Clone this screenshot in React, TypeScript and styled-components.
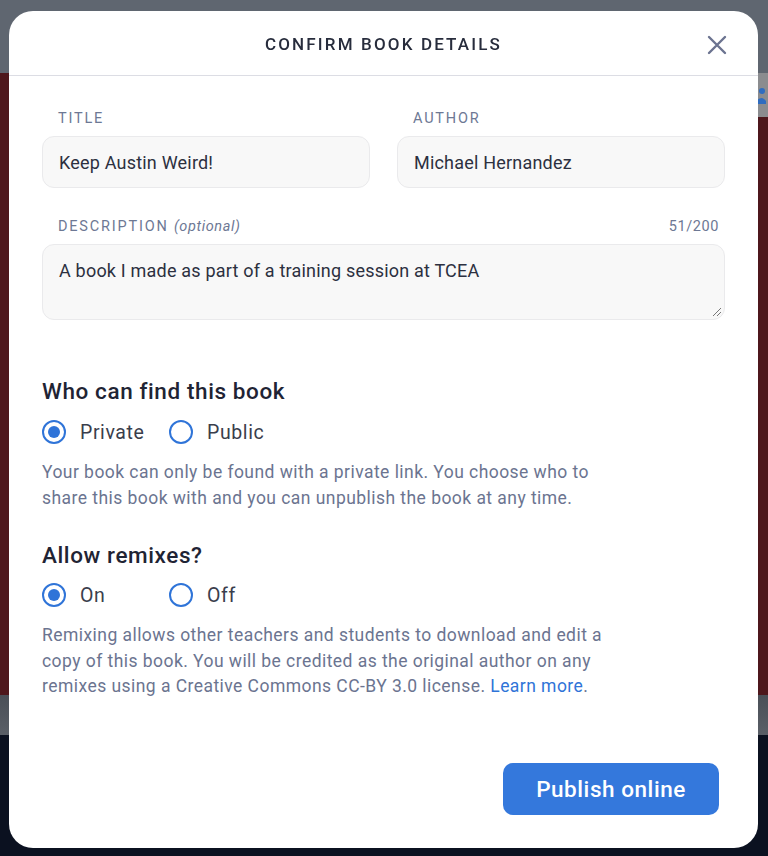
import React from "react";
import styled, { createGlobalStyle } from "styled-components";

const Global = createGlobalStyle`
  html, body { margin: 0; padding: 0; }
  body { font-family: Roboto, "Liberation Sans", sans-serif; -webkit-font-smoothing: antialiased; }
  * { box-sizing: border-box; }
`;

const Backdrop = styled.div`
  width: 768px;
  height: 856px;
  display: flex;
  flex-direction: column;
  overflow: hidden;
`;

const TopBar = styled.div`
  height: 73px;
  background: #5f6670;
`;

const Stage = styled.div`
  flex: 1;
  background: #4e171c;
  display: flex;
  justify-content: flex-end;
  align-items: flex-start;
`;

const ToolPanel = styled.div`
  width: 40px;
  height: 44px;
  background: #8b8c8f;
  display: flex;
  align-items: center;
  justify-content: flex-end;
  padding-right: 2px;
`;

const StripBar = styled.div`
  height: 40px;
  background: linear-gradient(#4a4f57, #5a5f67);
`;

const Footer = styled.div`
  height: 121px;
  background: #0b1120;
`;

const Overlay = styled.div`
  position: fixed;
  inset: 0;
  padding: 11px 10px 8px 9px;
  display: flex;
`;

const Modal = styled.div`
  flex: 1;
  background: #ffffff;
  border-radius: 24px;
  display: flex;
  flex-direction: column;
`;

const Header = styled.div`
  height: 65px;
  border-bottom: 1px solid #dcdde4;
  display: flex;
  align-items: center;
  justify-content: center;
  position: relative;
`;

const HeaderTitle = styled.h1`
  margin: 0;
  font-size: 17px;
  font-weight: 500;
  letter-spacing: 2.15px;
  color: #272c3c;
  padding-top: 2px;
`;

const CloseButton = styled.button`
  position: absolute;
  right: 31px;
  top: 24px;
  width: 20px;
  height: 20px;
  padding: 0;
  border: 0;
  background: none;
  display: flex;
  align-items: center;
  justify-content: center;
`;

const Body = styled.div`
  flex: 1;
  padding: 34px 33px 0 33px;
  display: flex;
  flex-direction: column;
`;

const FieldRow = styled.div`
  display: grid;
  grid-template-columns: 1fr 1fr;
  gap: 27px;
`;

const Field = styled.div<{ $gapTop?: number }>`
  display: flex;
  flex-direction: column;
  margin-top: ${(p) => p.$gapTop ?? 0}px;
`;

const LabelRow = styled.div`
  display: flex;
  justify-content: space-between;
  align-items: baseline;
  padding: 0 6px 0 16px;
  margin-bottom: 9px;
`;

const Label = styled.label`
  font-size: 14.5px;
  line-height: 17px;
  letter-spacing: 1.8px;
  color: #6d7894;
  text-transform: uppercase;
`;

const Optional = styled.em`
  text-transform: none;
  letter-spacing: 0.6px;
  font-style: italic;
`;

const Counter = styled.span`
  font-size: 14.5px;
  color: #6d7894;
  letter-spacing: 0.6px;
`;

const Input = styled.div`
  height: 52px;
  border: 1px solid #eaeaec;
  background: #f8f8f8;
  border-radius: 12px;
  padding: 0 16px;
  display: flex;
  align-items: center;
  font-size: 18px;
  letter-spacing: 0.2px;
  color: #2c3040;
`;

const TextArea = styled.div`
  height: 76px;
  border: 1px solid #eaeaec;
  background: #f8f8f8;
  border-radius: 12px;
  padding: 14px 16px;
  font-size: 18px;
  letter-spacing: 0.2px;
  line-height: 24px;
  color: #2c3040;
  position: relative;
`;

const Grip = styled.svg`
  position: absolute;
  right: 2px;
  bottom: 2px;
`;

const Section = styled.section<{ $gapTop: number }>`
  display: flex;
  flex-direction: column;
  margin-top: ${(p) => p.$gapTop}px;
`;

const SectionTitle = styled.h2`
  margin: 0;
  font-size: 22.5px;
  letter-spacing: 0.6px;
  line-height: 28px;
  font-weight: 500;
  color: #1f2434;
`;

const RadioGroup = styled.div<{ $gapTop: number }>`
  display: flex;
  margin-top: ${(p) => p.$gapTop}px;
`;

const RadioOption = styled.label`
  min-width: 127px;
  display: flex;
  align-items: center;
  gap: 13px;
  font-size: 19.5px;
  letter-spacing: 0.6px;
  color: #3a3e4c;
  height: 28px;
`;

const RadioLabel = styled.span`
  padding-left: 1px;
`;

const RadioCircle = styled.span<{ $checked?: boolean }>`
  width: 24px;
  height: 24px;
  border-radius: 50%;
  border: 2px solid #2f74d8;
  display: flex;
  align-items: center;
  justify-content: center;
  &::after {
    content: "";
    width: 12px;
    height: 12px;
    border-radius: 50%;
    background: ${(p) => (p.$checked ? "#2f74d8" : "transparent")};
  }
`;

const Help = styled.p<{ $gapTop: number }>`
  margin: ${(p) => p.$gapTop}px 0 0;
  font-size: 17.5px;
  letter-spacing: 0.45px;
  line-height: 25.5px;
  color: #6b7490;
`;

const Link = styled.a`
  color: #2f74d8;
  text-decoration: none;
`;

const Actions = styled.div`
  margin-top: auto;
  padding: 0 6px 33px 0;
  display: flex;
  justify-content: flex-end;
`;

const PrimaryButton = styled.button`
  width: 216px;
  height: 52px;
  border: 0;
  border-radius: 10px;
  background: #3478dc;
  color: #ffffff;
  font-family: Roboto, "Liberation Sans", sans-serif;
  font-size: 22.5px;
  letter-spacing: 0.55px;
  font-weight: 500;
`;

function Radio({ label, checked }: { label: string; checked?: boolean }) {
  return (
    <RadioOption>
      <RadioCircle $checked={checked} />
      <RadioLabel>{label}</RadioLabel>
    </RadioOption>
  );
}

export default function App() {
  return (
    <>
      <Global />
      <Backdrop>
        <TopBar />
        <Stage>
          <ToolPanel>
            <svg width="14" height="20" viewBox="0 0 14 20">
              <circle cx="10" cy="6" r="3" fill="#2f6cc0" />
              <path d="M4 16 q6 -6 10 0 v3 h-10z" fill="#2f6cc0" />
            </svg>
          </ToolPanel>
        </Stage>
        <StripBar />
        <Footer />
      </Backdrop>
      <Overlay>
        <Modal>
          <Header>
            <HeaderTitle>CONFIRM BOOK DETAILS</HeaderTitle>
            <CloseButton aria-label="Close">
              <svg width="20" height="20" viewBox="0 0 20 20">
                <path d="M2 2 L18 18 M18 2 L2 18" stroke="#6b7390" strokeWidth="2.4" strokeLinecap="round" />
              </svg>
            </CloseButton>
          </Header>
          <Body>
            <FieldRow>
              <Field>
                <LabelRow>
                  <Label>Title</Label>
                </LabelRow>
                <Input>Keep Austin Weird!</Input>
              </Field>
              <Field>
                <LabelRow>
                  <Label>Author</Label>
                </LabelRow>
                <Input>Michael Hernandez</Input>
              </Field>
            </FieldRow>
            <Field $gapTop={30}>
              <LabelRow>
                <Label>
                  Description <Optional>(optional)</Optional>
                </Label>
                <Counter>51/200</Counter>
              </LabelRow>
              <TextArea>
                A book I made as part of a training session at TCEA
                <Grip width="12" height="12" viewBox="0 0 12 12">
                  <path d="M3 11 L11 3 M7 11 L11 7" stroke="#777" strokeWidth="1" />
                </Grip>
              </TextArea>
            </Field>
            <Section $gapTop={57}>
              <SectionTitle>Who can find this book</SectionTitle>
              <RadioGroup $gapTop={13}>
                <Radio label="Private" checked />
                <Radio label="Public" />
              </RadioGroup>
              <Help $gapTop={14}>
                Your book can only be found with a private link. You choose who to
                <br />
                share this book with and you can unpublish the book at any time.
              </Help>
            </Section>
            <Section $gapTop={30}>
              <SectionTitle>Allow remixes?</SectionTitle>
              <RadioGroup $gapTop={12}>
                <Radio label="On" checked />
                <Radio label="Off" />
              </RadioGroup>
              <Help $gapTop={14}>
                Remixing allows other teachers and students to download and edit a
                <br />
                copy of this book. You will be credited as the original author on any
                <br />
                remixes using a Creative Commons CC-BY 3.0 license. <Link href="#">Learn more</Link>.
              </Help>
            </Section>
            <Actions>
              <PrimaryButton>Publish online</PrimaryButton>
            </Actions>
          </Body>
        </Modal>
      </Overlay>
    </>
  );
}
